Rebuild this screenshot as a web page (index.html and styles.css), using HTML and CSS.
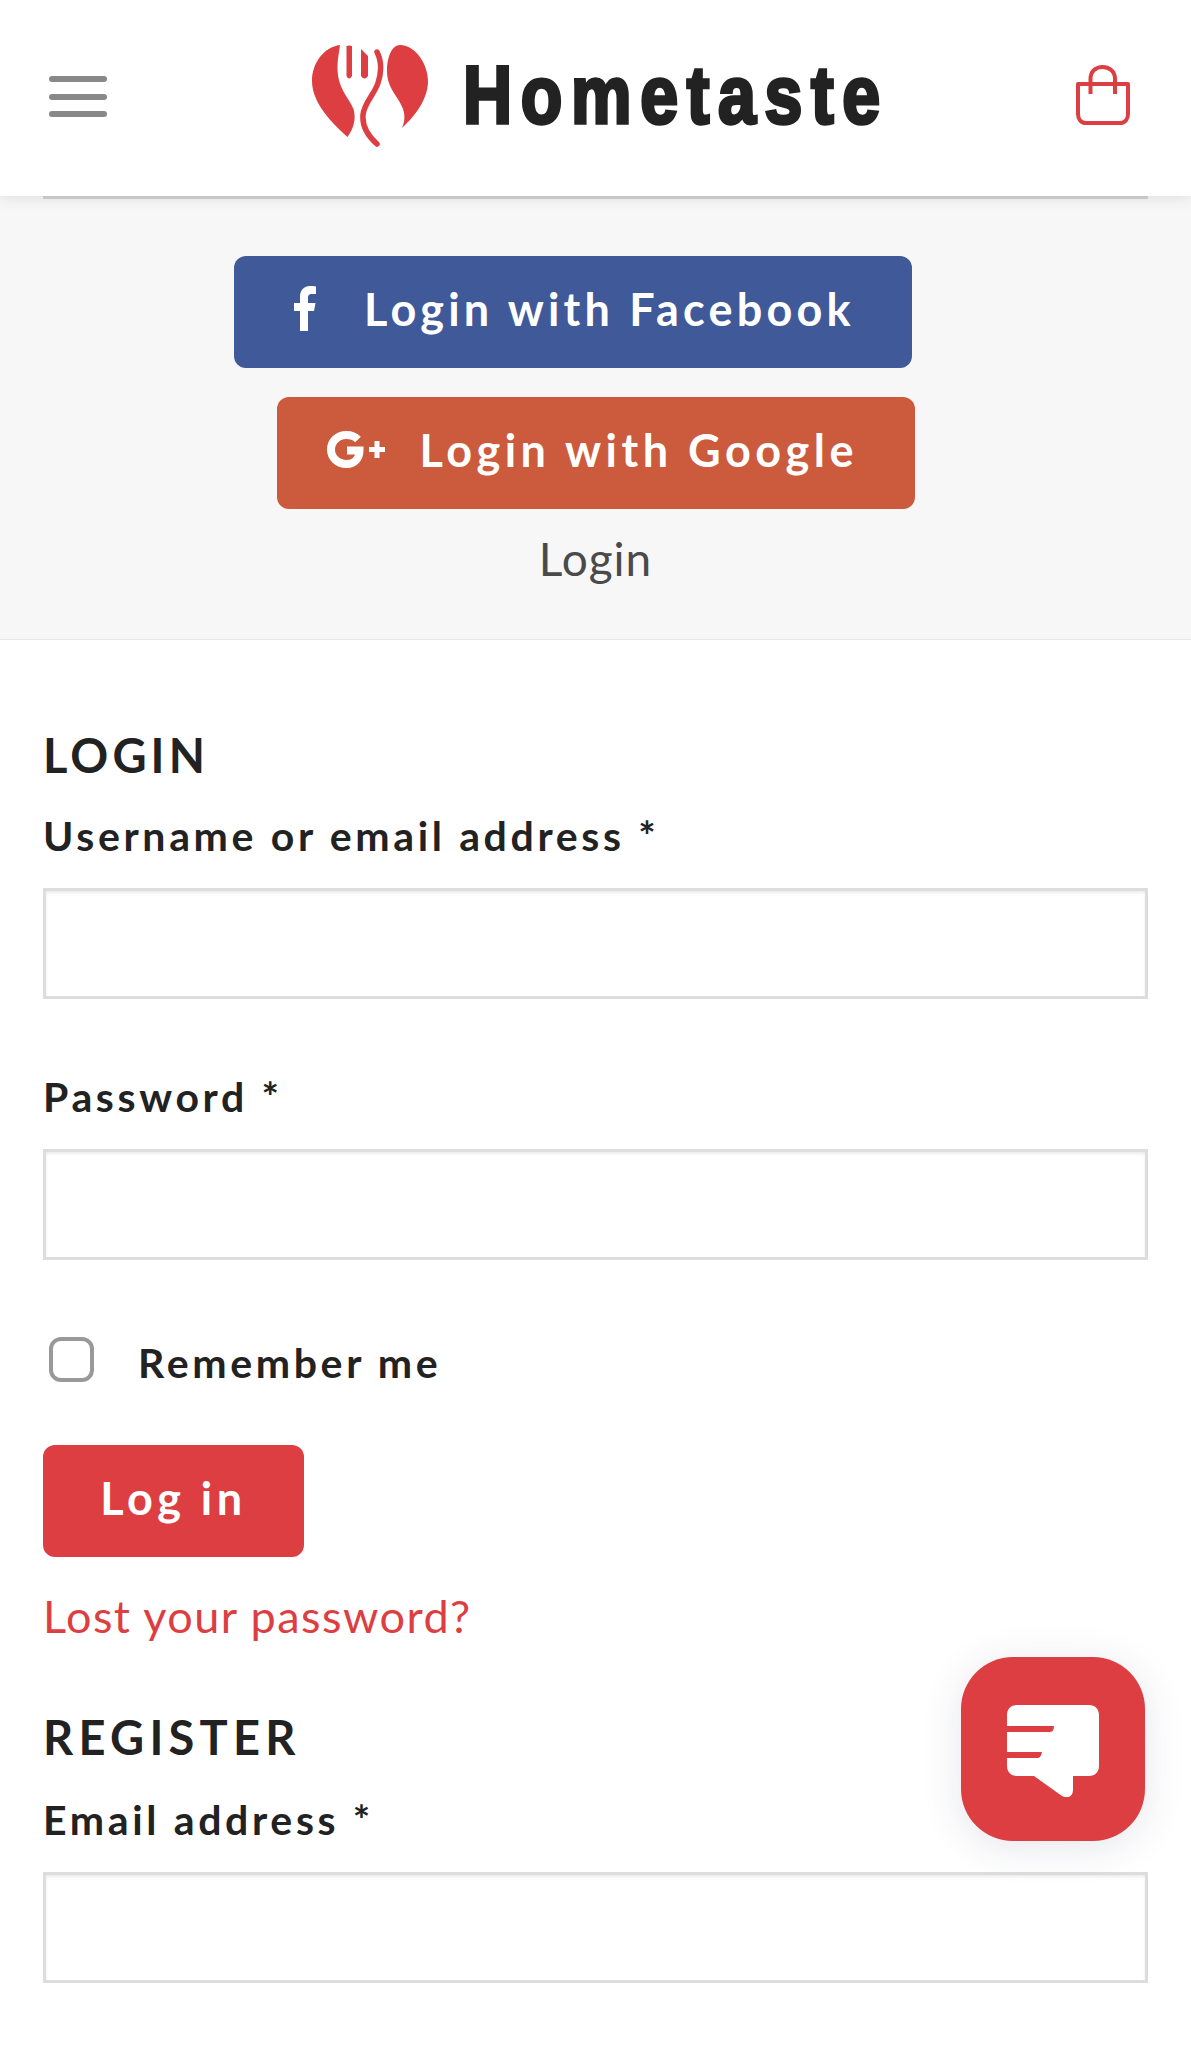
FILE: index.html
```html
<!DOCTYPE html>
<html lang="en">
<head>
    <meta charset="UTF-8">
    <meta name="viewport" content="width=device-width, initial-scale=1.0">
    <title>Login - Hometaste</title>
    <link rel="stylesheet" href="styles.css">
</head>
<body>
    <header class="site-header">
        <button class="menu-toggle" aria-label="Menu">
            <span></span><span></span><span></span>
        </button>

        <a href="#" class="brand">
            <svg class="brand-icon" viewBox="0 0 116 102" aria-hidden="true">
                <path d="M28 0C12 2 0 18 0 36C0 58 20 78 35.500 92C41 84 44 76 42 66C40 56 26 46 25.500 24C25.500 14 27 8 28 0Z"/>
                <path d="M88 0C104 0 116 20 116 36C116 55 102 72 90 83C93 76 93 70 91 64C87 52 75 44 75 26C75 12 80 0 88 0Z"/>
                <path d="M34.500 1Q37 0 40 1V31Q37 36 34.500 31Z"/>
                <path d="M49 4L56 11V31Q52.500 36 49 31Z"/>
                <path class="fork-stem" d="M65 7C69 15 70 26 66 38C62 50 52 58 51 70C50 82 56 91 65 99"/>
            </svg>
            <span class="brand-name">Hometaste</span>
        </a>

        <a href="#" class="cart-link" aria-label="Cart">
            <svg viewBox="0 0 54 60" aria-hidden="true">
                <path d="M2 19H52V49C52 54 49 58 44 58H10C5 58 2 54 2 49Z"/>
                <path d="M14.500 29V14C14.500 6 20 2 26.500 2C33 2 39 6 39 14V29"/>
            </svg>
        </a>
    </header>

    <section class="social-login">
        <div class="header-line"></div>
        <a href="#" class="social-btn btn-facebook">
            <svg class="icon-facebook" viewBox="0 0 22 45" aria-hidden="true">
                <path d="M6 45V25H0V17H6V11C6 4 10 0 16 0C18 0 20 0 22 .500V8H18C15 8 14 9 14 12V17H21.500L20 25H14V45Z"/>
            </svg>
            <span>Login with Facebook</span>
        </a>
        <a href="#" class="social-btn btn-google">
            <svg class="icon-google" viewBox="0 0 58 37" aria-hidden="true">
                <path class="g-stroke" d="M31 8.500C28 5.500 24 4 19.500 4C10.500 4 4 10.500 4 18.500C4 26.500 10.500 33 19.500 33C27.500 33 32.500 27.500 32.500 19.500H20"/>
                <path d="M47.500 10H52.500V16H58V21H52.500V27H47.500V21H42V16H47.500Z"/>
            </svg>
            <span>Login with Google</span>
        </a>
        <div class="social-caption">Login</div>
    </section>

    <main class="account-forms">
        <h2>Login</h2>
        <form>
            <label for="username">Username or email address *</label>
            <input type="text" id="username">

            <label for="password" class="label-spaced">Password *</label>
            <input type="password" id="password">

            <div class="remember-row">
                <input type="checkbox" id="remember">
                <label for="remember">Remember me</label>
            </div>

            <button type="submit" class="login-btn">Log in</button>
            <a href="#" class="lost-link">Lost your password?</a>
        </form>

        <h2 class="register-title">Register</h2>
        <form>
            <label for="regEmail">Email address *</label>
            <input type="email" id="regEmail">
        </form>
    </main>

    <!-- Floating chat button -->
    <a href="#" class="chat-btn" aria-label="Chat">
        <svg viewBox="0 0 92 92" aria-hidden="true">
            <path d="M10 0H82C88 0 92 4 92 10V61C92 67 88 71 82 71H66V85C66 92 60 94 55 91L27 71H10C4 71 0 67 0 61V53H30C33 53 34 51 35 47H0V27H43C46 27 47 24 47 21H0V10C0 4 4 0 10 0Z"/>
        </svg>
    </a>
</body>
</html>
```

FILE: styles.css
```css
* {
    box-sizing: border-box;
}

html, body {
    height: 2048px;
    overflow: hidden;
}

body {
    margin: 0;
    background-color: #fff;
    font-family: "Lato", "Open Sans", sans-serif;
    color: #222;
}

a {
    text-decoration: none;
}

/* Header */
.site-header {
    position: relative;
    z-index: 2;
    height: 196px;
    padding: 0 61px 5px 49px;
    display: flex;
    align-items: center;
    background-color: #fff;
    box-shadow: 0 2px 14px rgba(0, 0, 0, 0.1);
}

.menu-toggle {
    width: 58px;
    height: 41px;
    margin-top: 2px;
    padding: 0;
    border: 0;
    background: none;
    display: flex;
    flex-direction: column;
    justify-content: space-between;
}

.menu-toggle span {
    display: block;
    height: 6px;
    border-radius: 3px;
    background-color: #888;
}

.brand {
    margin-left: 205px;
    display: flex;
    align-items: center;
}

.brand-icon {
    width: 116px;
    height: 102px;
    fill: #dc3e42;
}

.fork-stem {
    fill: none;
    stroke: #dc3e42;
    stroke-width: 5.500;
    stroke-linecap: round;
}

/* wordmark is a condensed face, squeezed from the bold sans */
.brand-name {
    display: block;
    width: 418px;
    margin-left: 35px;
    font-family: "Liberation Sans", sans-serif;
    font-size: 81px;
    font-weight: 700;
    line-height: 85px;
    letter-spacing: 10.300px;
    white-space: nowrap;
    color: #222;
    -webkit-text-stroke: 3.500px #222;
    transform: scaleX(0.84);
    transform-origin: left center;
}

.cart-link {
    margin-left: auto;
    margin-bottom: 2px;
    width: 54px;
    height: 60px;
}

.cart-link svg {
    display: block;
    width: 54px;
    height: 60px;
    fill: none;
    stroke: #dc3e42;
    stroke-width: 4;
    stroke-linejoin: round;
}

/* Social login band */
.social-login {
    height: 444px;
    display: flex;
    flex-direction: column;
    align-items: center;
    background-color: #f7f7f7;
    border-bottom: 1px solid #e6e6e6;
}

.header-line {
    align-self: stretch;
    height: 3px;
    margin: 0 43px 57px;
    background-color: #d2d2d2;
}

.social-btn {
    height: 112px;
    padding-bottom: 7px;
    display: flex;
    align-items: center;
    border-radius: 12px;
    color: #fff;
    font-size: 45px;
    font-weight: 700;
    letter-spacing: 4.200px;
}

.btn-facebook {
    width: 678px;
    margin-right: 45px;
    padding-left: 60px;
    background-color: #3f5999;
}

.btn-google {
    width: 638px;
    margin-top: 29px;
    padding-left: 50px;
    background-color: #cc5a3c;
    letter-spacing: 4.500px;
}

.icon-facebook {
    width: 22px;
    height: 45px;
    margin-right: 48px;
    fill: #fff;
}

.icon-google {
    width: 58px;
    height: 37px;
    margin-right: 35px;
    fill: #fff;
}

.g-stroke {
    fill: none;
    stroke: #fff;
    stroke-width: 8;
}

.social-caption {
    margin-top: 25px;
    font-size: 46px;
    font-weight: 400;
    line-height: 50px;
    letter-spacing: 1px;
    color: #4a4a4a;
}

/* Login and register forms */
.account-forms {
    padding: 85px 43px 0;
}

h2 {
    margin: 0 0 25px;
    font-size: 47px;
    font-weight: 700;
    line-height: 60px;
    letter-spacing: 4.100px;
    text-transform: uppercase;
}

label {
    display: block;
    font-size: 41px;
    font-weight: 700;
    line-height: 52px;
    letter-spacing: 3.650px;
}

input[type="text"],
input[type="password"],
input[type="email"] {
    display: block;
    width: 100%;
    height: 111px;
    margin-top: 26px;
    border: 3px solid #ddd;
    background-color: #fff;
    box-shadow: inset 0 2px 3px rgba(0, 0, 0, 0.08);
}

.label-spaced {
    margin-top: 72px;
}

.remember-row {
    margin-top: 77px;
    padding-left: 6px;
    display: flex;
    align-items: center;
    gap: 44px;
}

input[type="checkbox"] {
    appearance: none;
    width: 45px;
    height: 45px;
    margin: 0 0 7px;
    border: 4px solid #999;
    border-radius: 12px;
    background-color: #fff;
}

.login-btn {
    display: block;
    width: 261px;
    height: 112px;
    margin-top: 56px;
    padding-bottom: 8px;
    border: 0;
    border-radius: 12px;
    background-color: #dc3e42;
    color: #fff;
    font-family: inherit;
    font-size: 45px;
    font-weight: 700;
    letter-spacing: 4.500px;
}

.lost-link {
    display: block;
    margin-top: 33px;
    font-size: 45px;
    line-height: 52px;
    letter-spacing: 1.450px;
    color: #dc3e42;
}

.register-title {
    margin-top: 65px;
    margin-bottom: 27px;
    letter-spacing: 5.250px;
}

/* Chat button sits over the page */
.chat-btn {
    position: fixed;
    top: 1657px;
    right: 46px;
    width: 184px;
    height: 184px;
    display: flex;
    align-items: center;
    justify-content: center;
    border-radius: 52px;
    background-color: #dc3e42;
    box-shadow: 0 6px 40px rgba(40, 50, 90, 0.12);
}

.chat-btn svg {
    display: block;
    width: 92px;
    height: 92px;
    margin-top: 3px;
    fill: #fff;
}
```
